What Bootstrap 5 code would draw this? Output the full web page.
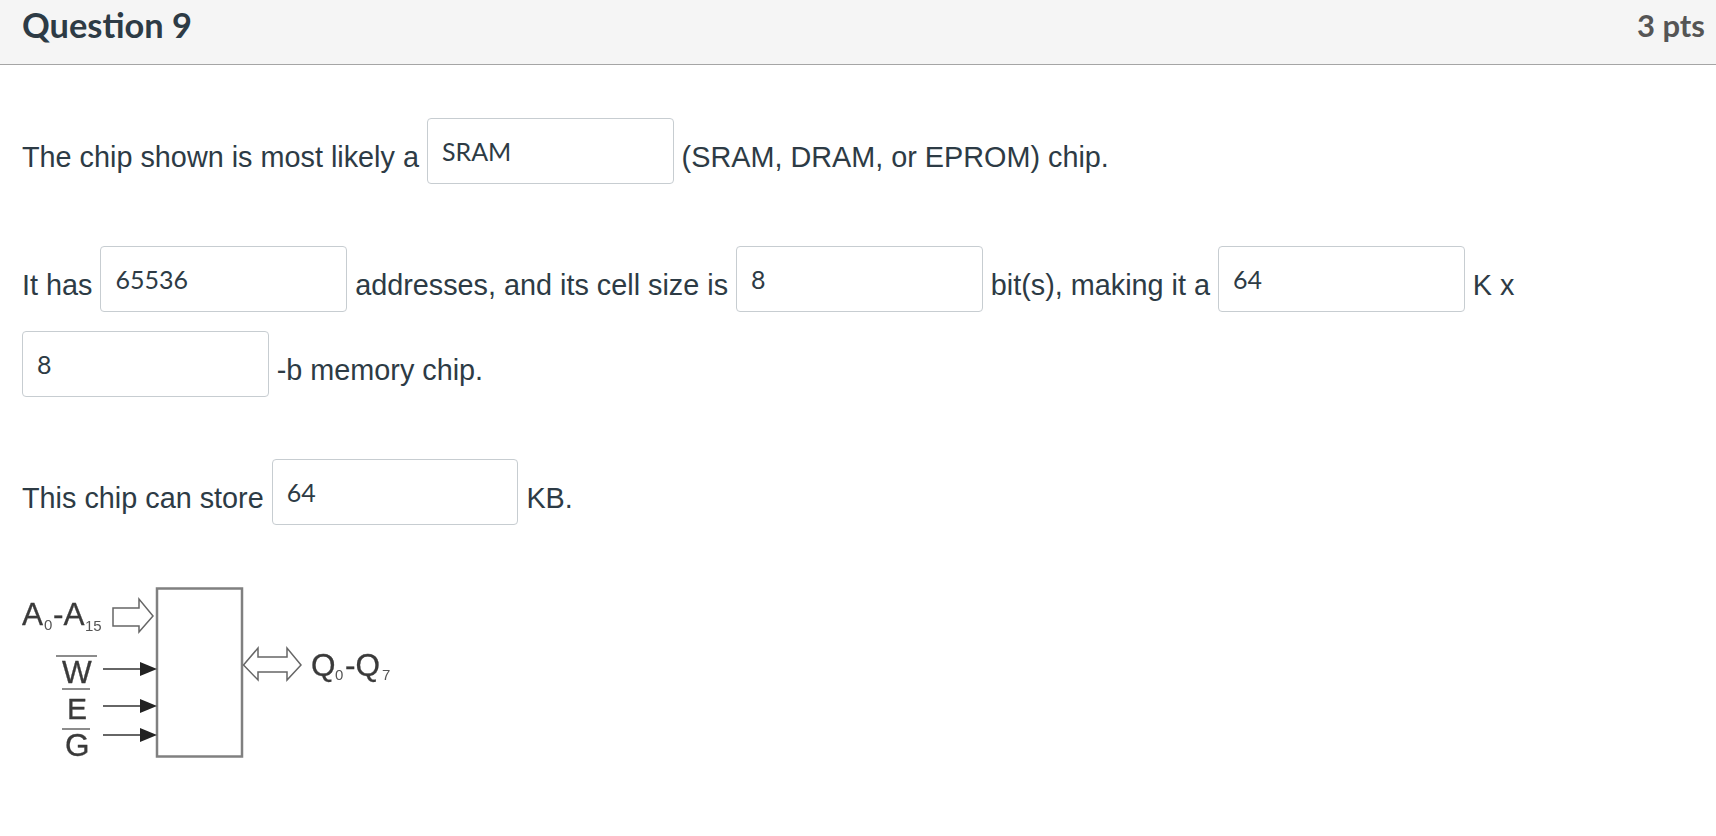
<!DOCTYPE html>
<html lang="en">
<head>
    <meta charset="UTF-8">
    <meta name="viewport" content="width=device-width, initial-scale=1.0">
    <title>Question 9</title>
    <link href="https://cdn.jsdelivr.net/npm/bootstrap@5.3.2/dist/css/bootstrap.min.css" rel="stylesheet">
    <style>
        body {
            background: #fff;
            color: #2d3b45;
            font-family: "Liberation Sans", Arial, sans-serif;
            font-size: 28.8px;
        }
        .quiz-head {
            height: 65px;
            padding: 0 11px 14px 22px;
            background: #f5f5f5;
            border-bottom: 1px solid #a5a5a5;
            font-family: Lato, sans-serif;
            font-weight: 700;
        }
        .quiz-title { font-size: 34.4px; margin: 0; font-weight: 700; color: #2d3b45; }
        .quiz-pts { font-size: 31px; color: #555; }
        .quiz-body { padding: 50px 22px 0; }
        .quiz-line { margin-bottom: 43px; line-height: 85px; }
        .blank {
            display: inline-block;
            width: 246.700px;
            height: 66px;
            padding: 0 14px;
            border: 1px solid #c7cdd1;
            border-radius: 4px;
            box-shadow: none;
            vertical-align: 6px;
            font-family: Lato, sans-serif;
            font-size: 25px;
            color: #2d3b45;
        }
        .chip-fig { display: block; margin-top: -22px; filter: blur(.6px); }
        .chip-fig text { font-family: "Liberation Sans", Arial, sans-serif; fill: #3a3a3a; stroke: #3a3a3a; stroke-width: .3px; font-size: 30px; }
        .chip-fig .sub { font-size: 15px; fill: #555; stroke: none; }
        .chip-fig .big { font-size: 31.5px; }
    </style>
</head>
<body>
<div class="quiz-head d-flex justify-content-between align-items-center">
    <h2 class="quiz-title">Question 9</h2>
    <div class="quiz-pts">3 pts</div>
</div>
<div class="quiz-body">
    <div class="quiz-line">The chip shown is most likely a <input class="form-control blank" type="text" value="SRAM"> (SRAM, DRAM, or EPROM) chip.</div>
    <div class="quiz-line">It has <input class="form-control blank" type="text" value="65536"> addresses, and its cell size is <input class="form-control blank" type="text" value="8"> bit(s), making it a <input class="form-control blank" type="text" value="64"> K x<br><input class="form-control blank" type="text" value="8"> -b memory chip.</div>
    <div class="quiz-line">This chip can store <input class="form-control blank" type="text" value="64"> KB.</div>
    <svg class="chip-fig" width="398" height="220" viewBox="22 0 398 220">
        <rect x="157" y="26.500" width="85" height="168" fill="#fff" stroke="#808080" stroke-width="2.500"/>
        <polygon points="113,46 139,46 139,37 153,54 139,70 139,64 113,64" fill="#fff" stroke="#666" stroke-width="1.500"/>
        <polygon points="243.500,103 258,86 258,95 287,95 287,86 301,103 287,118 287,110 258,110 258,118" fill="#fff" stroke="#666" stroke-width="1.500"/>
        <g stroke="#333" stroke-width="1.500">
            <line x1="103" y1="107" x2="142" y2="107"/>
            <line x1="103" y1="144" x2="142" y2="144"/>
            <line x1="103" y1="173" x2="142" y2="173"/>
            <line x1="56" y1="94" x2="97" y2="94" stroke="#666"/>
            <line x1="62" y1="127" x2="90" y2="127" stroke="#666"/>
            <line x1="62" y1="167" x2="90" y2="167" stroke="#666"/>
        </g>
        <g fill="#222">
            <polygon points="140,100 157,107 140,114"/>
            <polygon points="140,137 157,144 140,151"/>
            <polygon points="140,166 157,173 140,180"/>
        </g>
        <text class="big" x="22" y="63">A</text>
        <text class="sub" x="44" y="68">0</text>
        <text class="big" x="53" y="63">-A</text>
        <text class="sub" x="85" y="69">15</text>
        <text class="big" x="62" y="121">W</text>
        <text x="67" y="157">E</text>
        <text class="big" x="65" y="194">G</text>
        <text class="big" x="311" y="114">Q</text>
        <text class="sub" x="335" y="118">0</text>
        <text class="big" x="345" y="114">-Q</text>
        <text class="sub" x="382" y="118">7</text>
    </svg>
</div>
<script src="https://cdn.jsdelivr.net/npm/bootstrap@5.3.2/dist/js/bootstrap.bundle.min.js"></script>
</body>
</html>
